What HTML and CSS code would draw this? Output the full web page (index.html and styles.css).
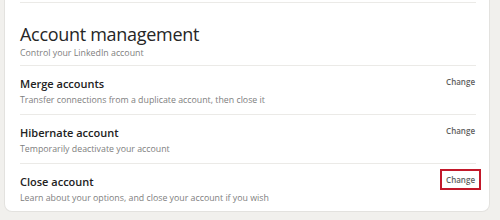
FILE: index.html
```html
<!DOCTYPE html>
<html lang="en">
  <head>
    <meta charset="UTF-8" />
    <meta name="viewport" content="width=device-width, initial-scale=1.0" />
    <title>Account management</title>
    <link rel="stylesheet" href="styles.css">
  </head>
  <body>
    <div class="card">
      <div class="prev"></div>
      <div class="head">
        <h1>Account management</h1>
        <p class="sub">Control your LinkedIn account</p>
      </div>
      <div class="row">
        <div class="info">
          <h2>Merge accounts</h2>
          <p>Transfer connections from a duplicate account, then close it</p>
        </div>
        <button class="change">Change</button>
      </div>
      <div class="row">
        <div class="info">
          <h2>Hibernate account</h2>
          <p>Temporarily deactivate your account</p>
        </div>
        <button class="change">Change</button>
      </div>
      <div class="row last">
        <div class="info">
          <h2>Close account</h2>
          <p>Learn about your options, and close your account if you wish</p>
        </div>
        <button class="change marked">Change</button>
      </div>
    </div>
  </body>
</html>
```
FILE: styles.css
```css
body {
  margin: 0;
  padding: 0 10px 8px 4px;
  background: #f1f0ed;
  font-family: "Open Sans", "Noto Sans", sans-serif;
  color: #222;
}
.card {
  background: #fff;
  border: 1px solid #e3e2df;
  border-top: none;
  border-radius: 0 0 8px 8px;
  padding: 0 8px 0 15px;
}
.prev {
  height: 2px;
  border-bottom: 1px solid #ebeae7;
  margin-right: 5px;
}
.head {
  padding-top: 18px;
  height: 44px;
  border-bottom: 1px solid #ebeae7;
  margin-right: 5px;
}
h1 {
  margin: 0;
  font-size: 18px;
  font-weight: 400;
  line-height: 26px;
  letter-spacing: -0.3px;
  color: #262626;
}
.sub {
  margin: 0;
  font-size: 8.8px;
  line-height: 12px;
  color: #808080;
}
.row {
  display: flex;
  justify-content: space-between;
  align-items: flex-start;
  height: 48px;
  border-bottom: 1px solid #ebeae7;
  margin-right: 5px;
}
.row.last {
  border-bottom: none;
  height: 47px;
}
.info {
  padding-top: 10px;
}
h2 {
  margin: 0;
  font-size: 11px;
  font-weight: 600;
  line-height: 16px;
  color: #222;
}
.info p {
  margin: 0;
  font-size: 8.8px;
  line-height: 16px;
  color: #808080;
}
.change {
  margin-top: 5px;
  margin-right: -5px;
  background: none;
  border: 2px solid transparent;
  padding: 3px 4px;
  font-family: inherit;
  font-size: 8px;
  font-weight: 600;
  color: #5e5e5e;
}
.change.marked {
  border-color: #c2182a;
}
```
